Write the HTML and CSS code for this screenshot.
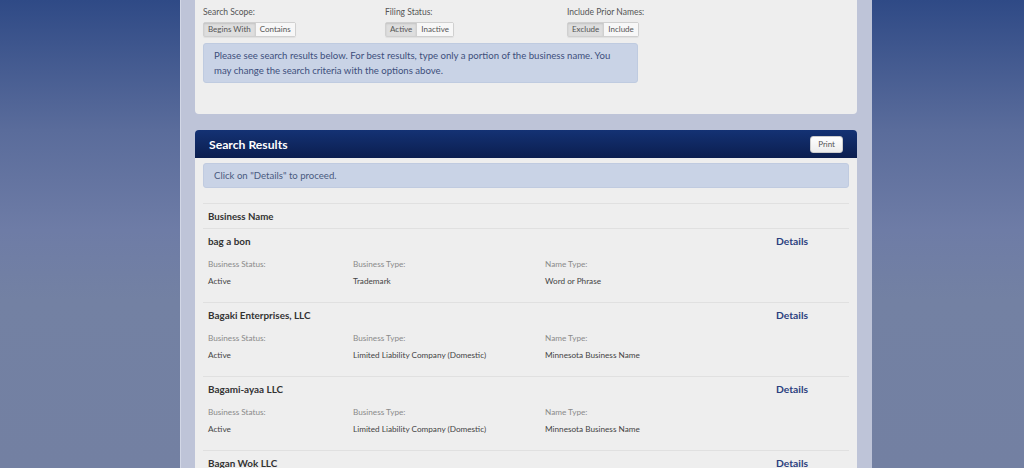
FILE: index.html
```html
<!DOCTYPE html>
<html>
<head>
<meta charset="utf-8">
<link rel="stylesheet" href="styles.css">
</head>
<body>
<div class="wrap">
  <div class="panel search-panel">
    <div class="options">
      <div class="opt">
        <div class="opt-label">Search Scope:</div>
        <div class="btn-group"><span class="btn on">Begins With</span><span class="btn">Contains</span></div>
      </div>
      <div class="opt">
        <div class="opt-label">Filing Status:</div>
        <div class="btn-group"><span class="btn on">Active</span><span class="btn">Inactive</span></div>
      </div>
      <div class="opt">
        <div class="opt-label">Include Prior Names:</div>
        <div class="btn-group"><span class="btn on">Exclude</span><span class="btn">Include</span></div>
      </div>
    </div>
    <div class="alert">Please see search results below. For best results, type only a portion of the business name. You may change the search criteria with the options above.</div>
  </div>

  <div class="results">
    <div class="results-head">
      <h2>Search Results</h2>
      <span class="print">Print</span>
    </div>
    <div class="results-body">
      <div class="info">Click on "Details" to proceed.</div>
      <div class="list">
        <div class="list-head">Business Name</div>

        <div class="row">
          <div class="row-top"><span class="name">bag a bon</span><span class="details">Details</span></div>
          <div class="cols">
            <div class="c1"><div class="lbl">Business Status:</div><div class="val">Active</div></div>
            <div class="c2"><div class="lbl">Business Type:</div><div class="val">Trademark</div></div>
            <div class="c3"><div class="lbl">Name Type:</div><div class="val">Word or Phrase</div></div>
          </div>
        </div>

        <div class="row">
          <div class="row-top"><span class="name">Bagaki Enterprises, LLC</span><span class="details">Details</span></div>
          <div class="cols">
            <div class="c1"><div class="lbl">Business Status:</div><div class="val">Active</div></div>
            <div class="c2"><div class="lbl">Business Type:</div><div class="val">Limited Liability Company (Domestic)</div></div>
            <div class="c3"><div class="lbl">Name Type:</div><div class="val">Minnesota Business Name</div></div>
          </div>
        </div>

        <div class="row">
          <div class="row-top"><span class="name">Bagami-ayaa LLC</span><span class="details">Details</span></div>
          <div class="cols">
            <div class="c1"><div class="lbl">Business Status:</div><div class="val">Active</div></div>
            <div class="c2"><div class="lbl">Business Type:</div><div class="val">Limited Liability Company (Domestic)</div></div>
            <div class="c3"><div class="lbl">Name Type:</div><div class="val">Minnesota Business Name</div></div>
          </div>
        </div>

        <div class="row">
          <div class="row-top"><span class="name">Bagan Wok LLC</span><span class="details">Details</span></div>
          <div class="cols">
            <div class="c1"><div class="lbl">Business Status:</div><div class="val">Active</div></div>
            <div class="c2"><div class="lbl">Business Type:</div><div class="val">Limited Liability Company (Domestic)</div></div>
            <div class="c3"><div class="lbl">Name Type:</div><div class="val">Minnesota Business Name</div></div>
          </div>
        </div>
      </div>
    </div>
  </div>
</div>
</body>
</html>
```

FILE: styles.css
```css
html, body {
  margin: 0;
  padding: 0;
  height: 100%;
  overflow: hidden;
}
body {
  font-family: Lato, "Open Sans", "Liberation Sans", sans-serif;
  background: linear-gradient(to bottom, #2f4a86 0px, #5a6c9b 130px, #6e7ca6 230px, #7381a3 300px, #7380a2 468px);
  color: #444;
}
.wrap {
  margin-left: 180px;
  width: 662px;
  padding: 0 15px 0 14px;
  background: #bec4d8;
  min-height: 100%;
  border-left: 1px solid #d2d7e6;
  box-sizing: content-box;
}
.panel {
  background: #eeeeee;
}
.search-panel {
  padding: 6px 8px 31px 8px;
  border-radius: 0 0 4px 4px;
}
.options {
  display: flex;
}
.opt {
  width: 182px;
}
.opt-label {
  font-size: 8.5px;
  color: #555;
  line-height: 12px;
  margin-bottom: 4px;
}
.btn-group {
  display: flex;
  width: max-content;
  border: 1px solid #d0d0d0;
  border-radius: 2px;
  box-shadow: 0 1px 1px rgba(0,0,0,0.06);
}
.btn {
  font-size: 8px;
  line-height: 13px;
  padding: 0 4px;
  color: #555;
  background: #f7f7f7;
}
.btn.on {
  background: #dedede;
  box-shadow: inset 0 1px 2px rgba(0,0,0,0.12);
  border-right: 1px solid #d0d0d0;
}
.alert {
  margin-top: 6px;
  width: 413px;
  padding: 4px 10px;
  background: #c9d3e6;
  border: 1px solid #bfcbe0;
  border-radius: 3px;
  font-size: 9.6px;
  line-height: 15px;
  color: #3d4f7c;
}
.results {
  margin-top: 16px;
}
.results-head {
  height: 28px;
  background: linear-gradient(to bottom, #143274, #0b1e4f);
  border-radius: 4px 4px 0 0;
  display: flex;
  align-items: center;
  justify-content: space-between;
  padding: 0 14px;
}
.results-head h2 {
  margin: 0;
  color: #fff;
  font-size: 12.2px;
  font-weight: 700;
}
.print {
  font-size: 8px;
  color: #555;
  background: linear-gradient(#ffffff, #ececec);
  border: 1px solid #ccc;
  border-radius: 3px;
  padding: 2px 7px;
  line-height: 11px;
}
.results-body {
  background: #eeeeee;
  padding: 5px 8px 0 8px;
  min-height: 320px;
}
.info {
  height: 25px;
  line-height: 23px;
  padding: 0 10px;
  background: #c9d3e6;
  border: 1px solid #c0cbe0;
  border-radius: 3px;
  box-sizing: border-box;
  font-size: 9.6px;
  color: #4a5a80;
}
.list {
  margin-top: 15px;
  border-top: 1px solid #e0e0e0;
}
.list-head {
  height: 24px;
  line-height: 24px;
  padding: 0 5px;
  font-size: 9.7px;
  font-weight: 700;
  color: #333;
  border-bottom: 1px solid #e0e0e0;
}
.row {
  height: 73px;
  border-bottom: 1px solid #e0e0e0;
  padding: 0 5px;
}
.row-top {
  display: flex;
  justify-content: space-between;
  padding-top: 5px;
  line-height: 14px;
  padding-right: 36px;
}
.name {
  font-size: 9.9px;
  font-weight: 700;
  color: #333;
}
.details {
  font-size: 10.3px;
  font-weight: 700;
  color: #2b3f7e;
}
.cols {
  display: flex;
  margin-top: 10px;
}
.c1 { width: 145px; }
.c2 { width: 192px; }
.c3 { width: 200px; }
.lbl {
  font-size: 8.2px;
  color: #8a8a8a;
  line-height: 12px;
}
.val {
  font-size: 8.2px;
  color: #444;
  line-height: 12px;
  margin-top: 5px;
}
```
